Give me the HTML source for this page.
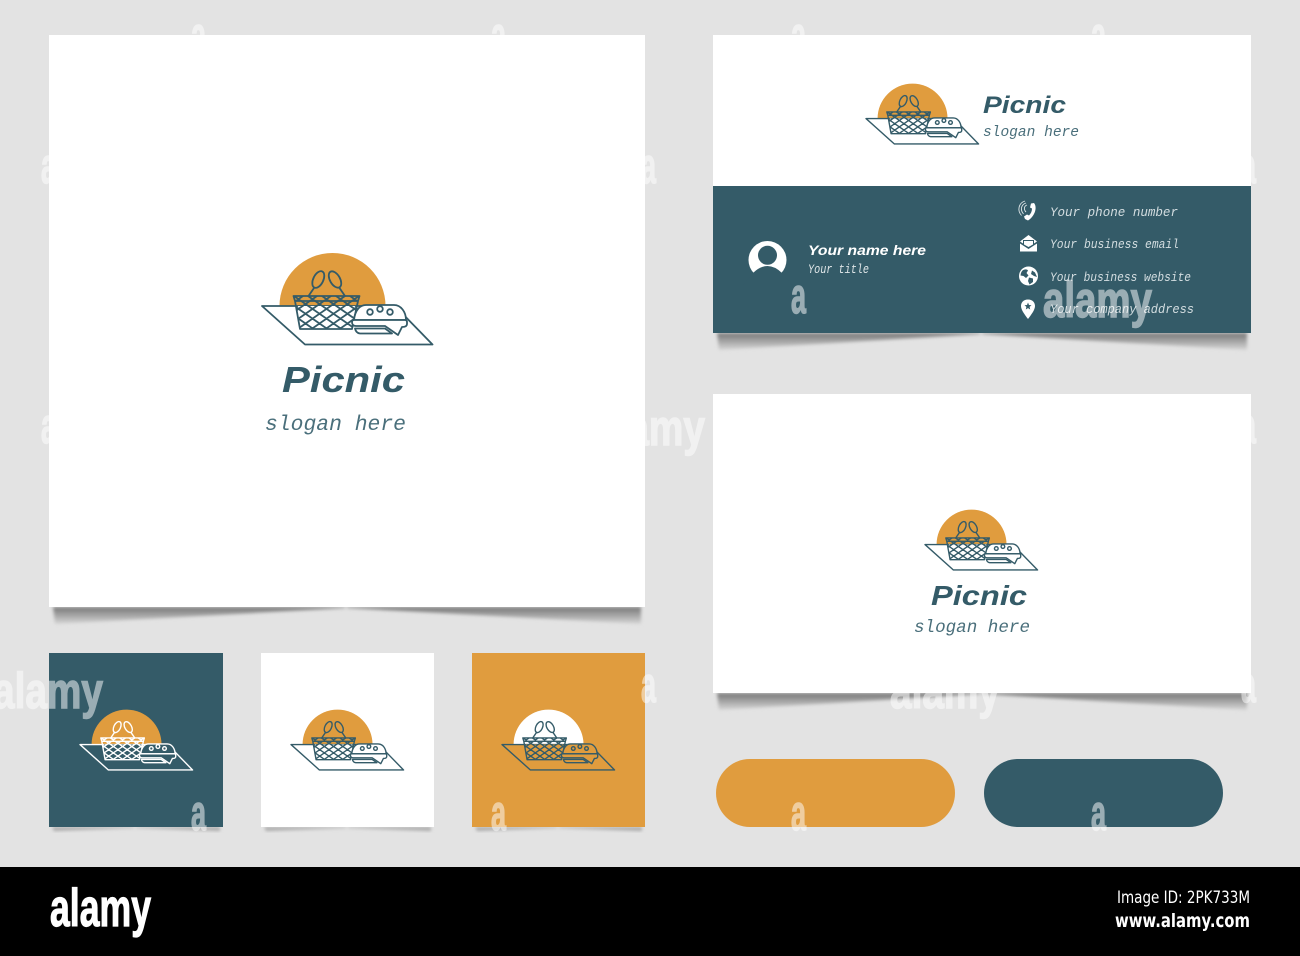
<!DOCTYPE html>
<html><head><meta charset="utf-8"><title>Picnic</title>
<style>
html,body{margin:0;padding:0;background:#e3e3e3}
svg{display:block}
.ln{fill:none;stroke:var(--l);stroke-width:var(--w,1.8);stroke-linejoin:round;stroke-linecap:round}
.pl{fill:var(--p);stroke:var(--l);stroke-width:var(--w,1.8);stroke-linejoin:round;stroke-linecap:round}
.nm{font-family:"Liberation Sans",sans-serif;font-weight:bold;font-style:italic}
.mo{font-family:"Liberation Mono",monospace;font-style:italic}
.wm{font-family:"Liberation Sans",sans-serif;font-weight:bold;fill:#fff;stroke:#fff;stroke-width:1.4px;opacity:.5;font-size:50px}
</style></head>
<body>
<svg width="1300" height="956" viewBox="0 0 1300 956" xmlns="http://www.w3.org/2000/svg">
<defs>
<linearGradient id="sg" x1="0" y1="0" x2="0" y2="1"><stop offset="0" stop-color="#777"/><stop offset="1" stop-color="#d6d6d6"/></linearGradient>
<filter id="bl" x="-5%" y="-50%" width="110%" height="200%"><feGaussianBlur stdDeviation="1.6"/></filter>
<clipPath id="sunclip"><rect x="270" y="245" width="125" height="61"/></clipPath>
<clipPath id="bask"><path d="M293.500 296H359.500L352 329H300Z"/></clipPath>
<symbol id="logo" viewBox="0 0 1300 956" width="1300" height="956" overflow="visible">
  <circle cx="332.500" cy="306" r="53" fill="var(--s)" clip-path="url(#sunclip)"/>
  <path class="pl" d="M262 306H395L432.500 344.500H305Z"/>
  <path d="M298 306H355L351 329H301Z" fill="var(--b)"/>
  <ellipse class="ln" cx="318.300" cy="279.500" rx="5" ry="9" transform="rotate(26 318.300 279.500)"/>
  <ellipse class="ln" cx="335" cy="279.500" rx="5" ry="9" transform="rotate(-30 335 279.500)"/>
  <path class="ln" d="M314 288L308.500 296M339.500 288L345 296"/>
  <g clip-path="url(#bask)"><path class="ln" d="M224 296l56 39M238 296l56 39M252 296l56 39M266 296l56 39M280 296l56 39M294 296l56 39M308 296l56 39M322 296l56 39M336 296l56 39M350 296l56 39M303 296l-56 39M317 296l-56 39M331 296l-56 39M345 296l-56 39M359 296l-56 39M373 296l-56 39M387 296l-56 39M401 296l-56 39M415 296l-56 39M429 296l-56 39"/></g>
  <path class="ln" d="M293.500 296H359.500L358 301H295ZM295 301L300 329H352L358 301"/>
  <path class="pl" d="M354 320C355 310 360 305 366 305H394C401 305 406 312 406 320Z"/>
  <path class="pl" d="M352 322Q352 320 354 320H405Q407 320 407 322V324Q407 327 402 327L398 335L385 326H356Q352 326 352 322Z"/>
  <path class="pl" d="M355 328.500H385L392 333.500H360Q356 333 355 328.500Z"/>
  <circle class="ln" cx="370" cy="312" r="2.800"/>
  <circle class="ln" cx="380" cy="309" r="2.800"/>
  <circle class="ln" cx="390" cy="312" r="2.800"/>
</symbol>
</defs>

<rect width="1300" height="956" fill="#e3e3e3"/>

<!-- shadows -->
<g fill="url(#sg)" filter="url(#bl)">
  <path d="M53 607H345V608L55 624Z"/><path d="M347 607H641V624L347 608Z"/>
  <path d="M717 333H980V334L719 350Z"/><path d="M982 333H1247V350L982 334Z"/>
  <path d="M717 693H980V694L719 710Z"/><path d="M982 693H1247V710L982 694Z"/>
</g>
<g fill="#aaa" filter="url(#bl)">
  <path d="M52 827H134V828L54 831Z"/><path d="M136 827H220V831L136 828Z"/>
  <path d="M264 827H346V828L266 831Z"/><path d="M348 827H431V831L348 828Z"/>
  <path d="M475 827H557V828L477 831Z"/><path d="M559 827H642V831L559 828Z"/>
</g>

<!-- cards -->
<rect x="49" y="35" width="596" height="572" fill="#fff"/>
<rect x="713" y="35" width="538" height="151" fill="#fff"/>
<rect x="713" y="186" width="538" height="147" fill="#345b68"/>
<rect x="713" y="394" width="538" height="299" fill="#fff"/>
<rect x="49" y="653" width="174" height="174" fill="#345b68"/>
<rect x="261" y="653" width="173" height="174" fill="#fff"/>
<rect x="472" y="653" width="173" height="174" fill="#e09c3e"/>
<rect x="716" y="759" width="239" height="68" rx="34" fill="#e09c3e"/>
<rect x="984" y="759" width="239" height="68" rx="34" fill="#345b68"/>

<!-- logos -->
<g style="--l:#345b68;--p:#fff;--s:#e09c3e;--b:#fff"><use href="#logo"/></g>
<g style="--l:#345b68;--p:#fff;--s:#e09c3e;--b:#fff;--w:2.100" transform="translate(693.100 -83.400) scale(.66)"><use href="#logo"/></g>
<g style="--l:#345b68;--p:#fff;--s:#e09c3e;--b:#fff;--w:2.100" transform="translate(752.100 342.600) scale(.66)"><use href="#logo"/></g>
<g style="--l:#fff;--p:#345b68;--s:#e09c3e;--b:#345b68;--w:2.100" transform="translate(-92.900 542.600) scale(.66)"><use href="#logo"/></g>
<g style="--l:#345b68;--p:#fff;--s:#e09c3e;--b:#fff;--w:2.100" transform="translate(118.100 542.600) scale(.66)"><use href="#logo"/></g>
<g style="--l:#345b68;--p:#e09c3e;--s:#fff;--b:#e09c3e;--w:2.100" transform="translate(329.100 542.600) scale(.66)"><use href="#logo"/></g>

<!-- logo texts -->
<g fill="#345b68">
<text class="nm" x="282" y="392" font-size="36" textLength="123" lengthAdjust="spacingAndGlyphs">Picnic</text>
<text class="nm" x="983" y="113" font-size="24" textLength="83" lengthAdjust="spacingAndGlyphs">Picnic</text>
<text class="nm" x="931" y="605" font-size="28" textLength="96" lengthAdjust="spacingAndGlyphs">Picnic</text>
</g>
<g fill="#4a6f7b">
<text class="mo" x="265" y="430" font-size="21" textLength="141" lengthAdjust="spacingAndGlyphs">slogan here</text>
<text class="mo" x="983" y="136" font-size="14.500" textLength="96" lengthAdjust="spacingAndGlyphs">slogan here</text>
<text class="mo" x="914" y="632" font-size="17.500" textLength="116" lengthAdjust="spacingAndGlyphs">slogan here</text>
</g>

<!-- business card -->
<circle cx="767.500" cy="260" r="19" fill="#fff"/>
<path d="M753 273Q767.500 259 782 273L792 285H743Z" fill="#345b68"/>
<circle cx="767.500" cy="255.300" r="9.500" fill="#345b68"/>
<text class="nm" x="808" y="255" font-size="14" fill="#fff" textLength="118" lengthAdjust="spacingAndGlyphs">Your name here</text>
<text class="mo" x="808" y="273" font-size="13" fill="#dfe6e8" textLength="61" lengthAdjust="spacingAndGlyphs">Your title</text>
<g font-size="12.500" fill="#d3dde0">
<text class="mo" x="1050" y="216" textLength="128" lengthAdjust="spacingAndGlyphs">Your phone number</text>
<text class="mo" x="1050" y="248" textLength="129" lengthAdjust="spacingAndGlyphs">Your business email</text>
<text class="mo" x="1050" y="281" textLength="141" lengthAdjust="spacingAndGlyphs">Your business website</text>
<text class="mo" x="1050" y="313" textLength="144" lengthAdjust="spacingAndGlyphs">Your company address</text>
</g>
<!-- phone -->
<path d="M1031 203.500L1034 203C1038 208 1034 217 1028 220.500L1025 219L1024 216.500L1027 214.500L1029 215.500C1031 213.500 1032 211 1032 208.500L1030 207.500Z" fill="#fff"/>
<g fill="none" stroke="#dfe6e8" stroke-width=".9"><path d="M1026 212C1023.500 209.500 1024 206 1027 205"/><path d="M1023.500 214C1020 210 1021 204.500 1026 203"/><path d="M1021.500 215.500C1017 210.500 1018.500 203 1025 201"/></g>
<!-- envelope -->
<path d="M1020 241.500L1028.500 235L1037 241.500L1034 243.500V240H1023V243.500Z" fill="#fff"/>
<path d="M1024 241H1033V244.500L1028.500 247L1024 244.500Z" fill="#fff"/>
<path d="M1020 243.500L1028.500 249L1037 243.500V251.500H1020Z" fill="#fff"/>
<!-- globe -->
<circle cx="1028.500" cy="276" r="9.500" fill="#fff"/>
<path d="M1022 271C1024 269 1027 269 1028 270.500L1026.500 273L1028.500 275.500L1026 278L1023.500 276L1020.500 275.500Q1020.500 273 1022 271ZM1032 270.500L1035 272.500L1037 277L1034 276L1031 274ZM1029 277.500L1033 278.500L1033 282L1029.500 284.500L1028 281Z" fill="#345b68"/>
<!-- pin -->
<path d="M1028 299.500C1033 299.500 1035 303 1035 306C1035 310 1031 315 1028 319C1025 315 1021 310 1021 306C1021 303 1023 299.500 1028 299.500Z" fill="#fff"/>
<path d="M1028 302.500L1029 305L1031.500 305.200L1029.600 306.900L1030.200 309.500L1028 308.100L1025.800 309.500L1026.400 306.900L1024.500 305.200L1027 305Z" fill="#345b68"/>

<!-- watermarks -->
<text class="wm" x="1043" y="317" textLength="109" lengthAdjust="spacingAndGlyphs">alamy</text>
<text class="wm" x="-7" y="708" textLength="110" lengthAdjust="spacingAndGlyphs">alamy</text>
<text class="wm" x="595" y="445" textLength="110" lengthAdjust="spacingAndGlyphs">alamy</text>
<text class="wm" x="890" y="708" textLength="110" lengthAdjust="spacingAndGlyphs">alamy</text>
<g>
<text class="wm" x="791" y="313" textLength="15" lengthAdjust="spacingAndGlyphs">a</text>
<text class="wm" x="191" y="830" textLength="15" lengthAdjust="spacingAndGlyphs">a</text>
<text class="wm" x="491" y="830" textLength="15" lengthAdjust="spacingAndGlyphs">a</text>
<text class="wm" x="791" y="830" textLength="15" lengthAdjust="spacingAndGlyphs">a</text>
<text class="wm" x="1091" y="830" textLength="15" lengthAdjust="spacingAndGlyphs">a</text>
<text class="wm" x="191" y="52" textLength="15" lengthAdjust="spacingAndGlyphs">a</text>
<text class="wm" x="491" y="52" textLength="15" lengthAdjust="spacingAndGlyphs">a</text>
<text class="wm" x="791" y="52" textLength="15" lengthAdjust="spacingAndGlyphs">a</text>
<text class="wm" x="1091" y="52" textLength="15" lengthAdjust="spacingAndGlyphs">a</text>
<text class="wm" x="41" y="183" textLength="15" lengthAdjust="spacingAndGlyphs">a</text>
<text class="wm" x="641" y="183" textLength="15" lengthAdjust="spacingAndGlyphs">a</text>
<text class="wm" x="1241" y="183" textLength="15" lengthAdjust="spacingAndGlyphs">a</text>
<text class="wm" x="41" y="443" textLength="15" lengthAdjust="spacingAndGlyphs">a</text>
<text class="wm" x="1241" y="443" textLength="15" lengthAdjust="spacingAndGlyphs">a</text>
<text class="wm" x="641" y="702" textLength="15" lengthAdjust="spacingAndGlyphs">a</text>
<text class="wm" x="1241" y="702" textLength="15" lengthAdjust="spacingAndGlyphs">a</text>
</g>

<!-- footer -->
<rect y="867" width="1300" height="89" fill="#000"/>
<text x="50" y="926" font-family="Liberation Sans,sans-serif" font-weight="bold" font-size="53" fill="#fff" stroke="#fff" stroke-width="1.200" textLength="101" lengthAdjust="spacingAndGlyphs">alamy</text>
<text x="1117" y="903" font-family="DejaVu Sans,sans-serif" font-size="17" fill="#fff" textLength="133" lengthAdjust="spacingAndGlyphs">Image ID: 2PK733M</text>
<text x="1115" y="927" font-family="DejaVu Sans,sans-serif" font-weight="bold" font-size="19" fill="#fff" textLength="135" lengthAdjust="spacingAndGlyphs">www.alamy.com</text>
</svg>
</body></html>
